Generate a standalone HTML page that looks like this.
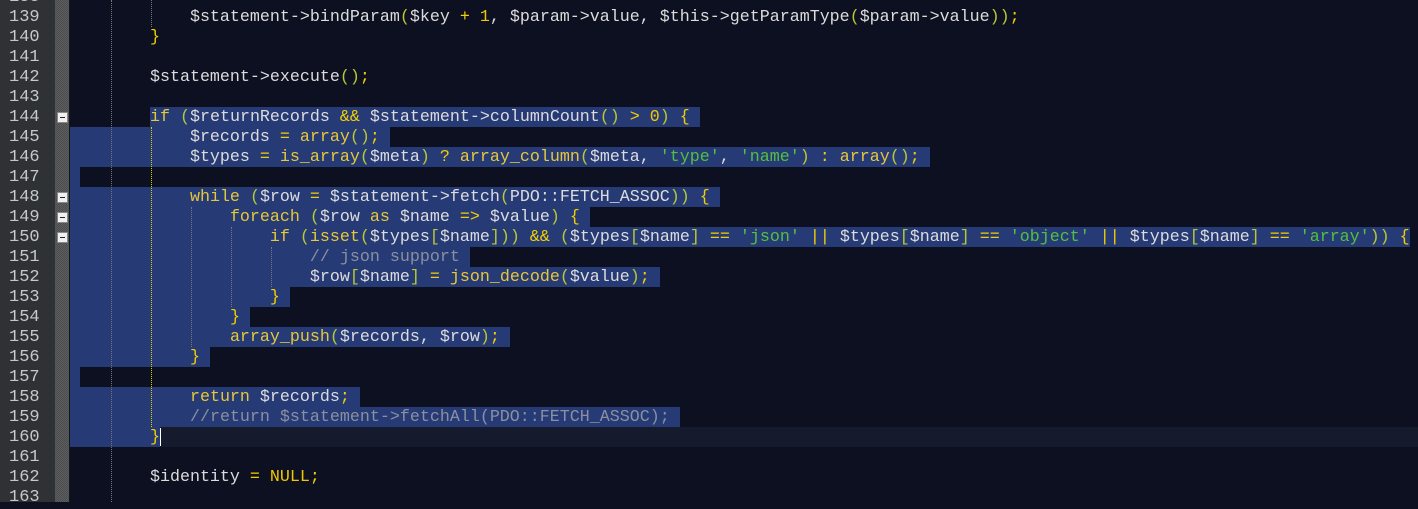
<!DOCTYPE html>
<html><head><meta charset="utf-8"><style>
body{margin:0;width:1418px;height:502px;background:#0c1020;overflow:hidden;position:relative;font-family:"Liberation Mono",monospace;font-size:16.67px}
#gut{position:absolute;left:0;top:0;width:55px;height:502px;background:#2f3234}
#fold{position:absolute;left:55px;top:0;width:14px;height:502px;background:repeating-conic-gradient(#4a4c4e 0 25%,#5c5e60 0 50%) 0 0/2px 2px}
#sep{position:absolute;left:69px;top:0;width:1px;height:502px;background:#15171a}
.ln{position:absolute;left:9px;color:#c8c8c8;height:20px;line-height:22px;font-size:17px}
.fb{position:absolute;left:57px;width:9px;height:9px;background:#f0f0f0;border:1px solid #888}
.fb:after{content:"";position:absolute;left:2px;top:4px;width:5px;height:1px;background:#222}
.row{position:absolute;left:70px;height:20px;line-height:22px;white-space:pre;color:#dcdcdc}
.sel{background:#263a75;display:inline-block;height:20px;vertical-align:top}
.g{position:absolute;width:0;border-left:1px dotted #777}
.gy{border-left-color:#e0d000}
.k{color:#e6c83a}.o{color:#f2d000}.p{color:#b8c832}.s{color:#52c040}.c{color:#8a90a0}.n{color:#f0c800}
</style></head><body>
<div id="gut"></div><div id="fold"></div><div id="sep"></div>
<div style="position:absolute;left:70px;top:427px;width:1348px;height:20px;background:#151a2c"></div>
<div class="ln" style="top:-13px">138</div>
<div class="ln" style="top:7px">139</div>
<div class="ln" style="top:27px">140</div>
<div class="ln" style="top:47px">141</div>
<div class="ln" style="top:67px">142</div>
<div class="ln" style="top:87px">143</div>
<div class="ln" style="top:107px">144</div>
<div class="ln" style="top:127px">145</div>
<div class="ln" style="top:147px">146</div>
<div class="ln" style="top:167px">147</div>
<div class="ln" style="top:187px">148</div>
<div class="ln" style="top:207px">149</div>
<div class="ln" style="top:227px">150</div>
<div class="ln" style="top:247px">151</div>
<div class="ln" style="top:267px">152</div>
<div class="ln" style="top:287px">153</div>
<div class="ln" style="top:307px">154</div>
<div class="ln" style="top:327px">155</div>
<div class="ln" style="top:347px">156</div>
<div class="ln" style="top:367px">157</div>
<div class="ln" style="top:387px">158</div>
<div class="ln" style="top:407px">159</div>
<div class="ln" style="top:427px">160</div>
<div class="ln" style="top:447px">161</div>
<div class="ln" style="top:467px">162</div>
<div class="ln" style="top:487px">163</div>
<div class="fb" style="top:112px"></div>
<div class="fb" style="top:192px"></div>
<div class="fb" style="top:212px"></div>
<div class="fb" style="top:232px"></div>

<div class="row" style="top:7px">            $statement-&gt;bindParam<span class="p">(</span>$key <span class="o">+</span> <span class="n">1</span>, $param-&gt;value, $this-&gt;getParamType<span class="p">(</span>$param-&gt;value<span class="p">))</span><span class="o">;</span></div>
<div class="row" style="top:27px">        <span class="o">}</span></div>
<div class="row" style="top:67px">        $statement-&gt;execute<span class="p">()</span><span class="o">;</span></div>
<div class="row" style="top:107px">        <span class="sel"><span class="k">if</span> <span class="p">(</span>$returnRecords <span class="o">&amp;&amp;</span> $statement-&gt;columnCount<span class="p">()</span> <span class="o">&gt;</span> <span class="n">0</span><span class="p">)</span> <span class="o">{</span> </span></div>
<div class="row" style="top:127px"><span class="sel">            $records <span class="o">=</span> <span class="k">array</span><span class="p">()</span><span class="o">;</span> </span></div>
<div class="row" style="top:147px"><span class="sel">            $types <span class="o">=</span> <span class="k">is_array</span><span class="p">(</span>$meta<span class="p">)</span> <span class="o">?</span> <span class="k">array_column</span><span class="p">(</span>$meta, <span class="s">'type'</span>, <span class="s">'name'</span><span class="p">)</span> <span class="o">:</span> <span class="k">array</span><span class="p">()</span><span class="o">;</span> </span></div>
<div class="row" style="top:167px"><span class="sel"> </span></div>
<div class="row" style="top:187px"><span class="sel">            <span class="k">while</span> <span class="p">(</span>$row <span class="o">=</span> $statement-&gt;fetch<span class="p">(</span>PDO::FETCH_ASSOC<span class="p">))</span> <span class="o">{</span> </span></div>
<div class="row" style="top:207px"><span class="sel">                <span class="k">foreach</span> <span class="p">(</span>$row <span class="k">as</span> $name <span class="o">=&gt;</span> $value<span class="p">)</span> <span class="o">{</span> </span></div>
<div class="row" style="top:227px"><span class="sel">                    <span class="k">if</span> <span class="p">(</span><span class="k">isset</span><span class="p">(</span>$types<span class="p">[</span>$name<span class="p">]))</span> <span class="o">&amp;&amp;</span> <span class="p">(</span>$types<span class="p">[</span>$name<span class="p">]</span> <span class="o">==</span> <span class="s">'json'</span> <span class="o">||</span> $types<span class="p">[</span>$name<span class="p">]</span> <span class="o">==</span> <span class="s">'object'</span> <span class="o">||</span> $types<span class="p">[</span>$name<span class="p">]</span> <span class="o">==</span> <span class="s">'array'</span><span class="p">))</span> <span class="o">{</span></span></div>
<div class="row" style="top:247px"><span class="sel">                        <span class="c">// json support</span> </span></div>
<div class="row" style="top:267px"><span class="sel">                        $row<span class="p">[</span>$name<span class="p">]</span> <span class="o">=</span> <span class="k">json_decode</span><span class="p">(</span>$value<span class="p">)</span><span class="o">;</span> </span></div>
<div class="row" style="top:287px"><span class="sel">                    <span class="o">}</span> </span></div>
<div class="row" style="top:307px"><span class="sel">                <span class="o">}</span> </span></div>
<div class="row" style="top:327px"><span class="sel">                <span class="k">array_push</span><span class="p">(</span>$records, $row<span class="p">)</span><span class="o">;</span> </span></div>
<div class="row" style="top:347px"><span class="sel">            <span class="o">}</span> </span></div>
<div class="row" style="top:367px"><span class="sel"> </span></div>
<div class="row" style="top:387px"><span class="sel">            <span class="k">return</span> $records<span class="o">;</span> </span></div>
<div class="row" style="top:407px"><span class="sel">            <span class="c">//return $statement-&gt;fetchAll(PDO::FETCH_ASSOC);</span> </span></div>
<div class="row" style="top:427px"><span class="sel">        <span class="o">}</span></span><span style="display:inline-block;width:1px;height:18px;background:#fff;vertical-align:top;margin-top:1px"></span></div>
<div class="row" style="top:467px">        $identity <span class="o">=</span> <span class="n">NULL</span><span class="o">;</span></div>

<div class="g" style="left:111px;top:0;height:502px"></div>
<div class="g" style="left:151px;top:0;height:27px"></div>
<div class="g gy" style="left:151px;top:127px;height:300px"></div>
<div class="g" style="left:191px;top:207px;height:140px"></div>
<div class="g" style="left:231px;top:227px;height:80px"></div>
<div class="g" style="left:271px;top:247px;height:40px"></div>
</body></html>
